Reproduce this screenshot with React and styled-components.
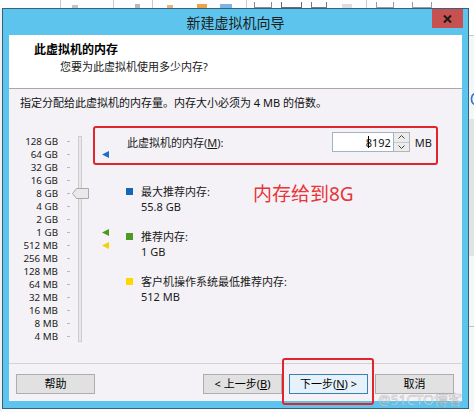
import React from "react";
import styled, { createGlobalStyle } from "styled-components";

const GlobalStyle = createGlobalStyle`
  html, body { margin: 0; padding: 0; }
  body {
    font-family: "Noto Sans", "Noto Sans CJK SC", sans-serif;
    font-size: 11px;
    color: #1a1a1a;
    background: #fbfbfb;
  }
`;

const Desktop = styled.div`
  position: relative;
  width: 474px;
  height: 412px;
  overflow: hidden;
  display: flex;
  flex-direction: column;
  background: #fbfbfb;
`;

/* strip of the host application's toolbar peeking above the dialog */
const HostToolbar = styled.div`
  height: 8px;
  display: flex;
  align-items: flex-end;
  flex-shrink: 0;
  background: #fdfdfd;
`;

const ToolGlyph = styled.span`
  display: block;
  margin-left: ${(p) => p.$gap}px;
  width: ${(p) => p.$w}px;
  height: ${(p) => p.$h}px;
  box-sizing: border-box;
  background: ${(p) => (p.$outline ? "transparent" : p.$color)};
  border: ${(p) => (p.$outline ? `1px solid ${p.$color}` : "none")};
  border-top: none;
`;

const Stage = styled.div`
  display: flex;
  flex: 1;
`;

const LeftEdge = styled.div`
  width: 2px;
  flex-shrink: 0;
  background: #f1f1f1;
`;

const Window = styled.div`
  position: relative;
  flex-shrink: 0;
  width: 467px;
  height: 401px;
  box-sizing: border-box;
  border: 1px solid #35637f;
  background: #5dc5ed;
  padding: 0 6px 7px;
  display: flex;
  flex-direction: column;
`;

const TitleBar = styled.div`
  margin: 0 -6px;
  height: 26px;
  display: flex;
  align-items: flex-start;
  flex-shrink: 0;
`;

const TitleSpacer = styled.div`
  width: 36px;
`;

const TitleText = styled.div`
  flex: 1;
  text-align: center;
  font-size: 14px;
  line-height: 27px;
  color: #1c1c1c;
`;

const CloseButton = styled.div`
  width: 31px;
  height: 19px;
  margin-right: 5px;
  background: #c75050;
  display: flex;
  align-items: center;
  justify-content: center;
`;

const Panel = styled.div`
  height: 366px;
  display: flex;
  flex-direction: column;
  background: #f4f2f6;
`;

const Header = styled.div`
  height: 54px;
  box-sizing: border-box;
  background: #ffffff;
  border-bottom: 1px solid #a9a9a9;
  padding: 7px 0 0 25px;
`;

const HeaderTitle = styled.div`
  font-weight: bold;
  font-size: 12px;
  line-height: 16px;
  color: #000;
`;

const HeaderSub = styled.div`
  padding-left: 26px;
  margin-top: 1px;
  line-height: 16px;
  color: #1a1a1a;
`;

const Body = styled.div`
  height: 274px;
  box-sizing: border-box;
  padding: 6px 0 0 11px;
`;

const Instruction = styled.div`
  line-height: 16px;
  color: #111;
`;

const Main = styled.div`
  position: relative;
  margin-top: 15px;
  display: flex;
`;

const Scale = styled.div`
  display: flex;
  flex-direction: column;
  padding-top: 9px;
`;

const ScaleRow = styled.div`
  height: 13px;
  display: flex;
  align-items: center;
`;

const ScaleLabel = styled.span`
  width: 38px;
  text-align: right;
  font-size: 9.8px;
  line-height: 13px;
  white-space: nowrap;
  color: #222;
`;

const Tick = styled.span`
  margin-left: 9px;
  width: 3px;
  height: 1px;
  background: #b8b8b8;
`;

const Rail = styled.div`
  position: relative;
  width: 42px;
  height: 220px;
`;

const Track = styled.div`
  margin: 10px 0 0 8px;
  width: 4px;
  height: 206px;
  box-sizing: border-box;
  border: 1px solid #cdcdcd;
  background: #e7e7e7;
`;

const Thumb = styled.svg`
  position: absolute;
  left: 2px;
  top: 62px;
`;

const Marker = styled.svg`
  position: absolute;
  left: 32px;
  top: ${(p) => p.$row * 13 + 12}px;
`;

const RightCol = styled.div`
  padding-left: 15px;
  display: flex;
  flex-direction: column;
`;

const MemoryRow = styled.div`
  margin-top: 6px;
  width: 305px;
  height: 20px;
  display: flex;
  align-items: center;
`;

const MemLabel = styled.span`
  flex: 1;
  line-height: 16px;
  margin-top: 2px;
`;

const NumberField = styled.div`
  width: 62px;
  height: 20px;
  box-sizing: border-box;
  border: 1px solid #a3b3c7;
  background: #ffffff;
  display: flex;
  align-items: center;
  justify-content: flex-end;
  padding-right: 2px;
  color: #111;
`;

const Caret = styled.span`
  width: 1px;
  height: 12px;
  background: #000;
  margin-right: -3px;
`;

const Spinner = styled.div`
  width: 16px;
  height: 20px;
  box-sizing: border-box;
  border: 1px solid #b5b5b5;
  border-left: none;
  display: flex;
  flex-direction: column;
`;

const SpinHalf = styled.div`
  flex: 1;
  background: #ececec;
  display: flex;
  align-items: center;
  justify-content: center;
  border-top: ${(p) => (p.$lower ? "1px solid #c8c8c8" : "none")};
`;

const Unit = styled.span`
  margin-left: 5px;
`;

const Legend = styled.div`
  margin-top: 32px;
  margin-left: -1px;
  display: flex;
  flex-direction: column;
  gap: 15px;
`;

const LegendItem = styled.div`
  display: flex;
  align-items: flex-start;
`;

const Swatch = styled.span`
  width: 7px;
  height: 7px;
  margin-top: 4px;
  margin-right: 8px;
  background: ${(p) => p.$color};
`;

const LegendText = styled.div`
  line-height: 15px;
`;

const RedFrame = styled.div`
  position: absolute;
  left: ${(p) => p.$x}px;
  top: ${(p) => p.$y}px;
  width: ${(p) => p.$w}px;
  height: ${(p) => p.$h}px;
  box-sizing: border-box;
  border: 2px solid #e2242b;
  border-radius: 3px;
  pointer-events: none;
`;

const RedNote = styled.div`
  position: absolute;
  left: 233px;
  top: 58px;
  font-size: 19px;
  line-height: 20px;
  color: #e8353a;
  white-space: nowrap;
`;

const Footer = styled.div`
  height: 38px;
  box-sizing: border-box;
  border-top: 1px solid #d3d3d3;
  padding: 10px 8px 0 7px;
  display: flex;
  justify-content: space-between;
  align-items: flex-start;
`;

const ButtonGroup = styled.div`
  display: flex;
  gap: 7px;
`;

const Button = styled.button`
  width: 79px;
  height: 20px;
  box-sizing: border-box;
  padding: 0;
  font-family: inherit;
  font-size: 11px;
  line-height: 18px;
  color: #000;
  border: 1px solid ${(p) => (p.$primary ? "#3c7fb1" : "#adadad")};
  background: ${(p) => (p.$primary ? "#e5f1fb" : "#e1e1e1")};
`;

const SideStrip = styled.div`
  flex: 1;
  display: flex;
  flex-direction: column;
  background: #f6f6f6;
  overflow: hidden;
`;

const SideTop = styled.div`
  height: 27px;
  background: #ffffff;
  border-bottom: 1px solid #c9c9c9;
`;

const SideArc = styled.svg`
  display: block;
  margin-top: 55px;
  margin-left: 1px;
`;

const SidePanel = styled.div`
  margin-top: 12px;
  height: 137px;
  background: #e3e3e3;
`;

const SideRule = styled.div`
  margin-top: 70px;
  height: 1px;
  background: #c4c4c4;
`;

const Watermark = styled.div`
  position: absolute;
  left: 378px;
  top: 392px;
  font-size: 14px;
  line-height: 16px;
  color: rgba(255, 255, 255, 0.55);
  -webkit-text-stroke: 0.6px rgba(150, 150, 150, 0.55);
  white-space: nowrap;
  pointer-events: none;
`;

const scaleLabels = [
  "128 GB", "64 GB", "32 GB", "16 GB", "8 GB", "4 GB", "2 GB", "1 GB",
  "512 MB", "256 MB", "128 MB", "64 MB", "32 MB", "16 MB", "8 MB", "4 MB",
];

const toolbarGlyphs = [
  { gap: 60, w: 1, h: 8, color: "#cacaca" },
  { gap: 11, w: 6, h: 3, color: "#c4c4c4" },
  { gap: 35, w: 1, h: 8, color: "#cacaca" },
  { gap: 21, w: 5, h: 4, color: "#b8b8b8" },
  { gap: 12, w: 1, h: 8, color: "#cacaca" },
  { gap: 14, w: 6, h: 3, color: "#e9b47a" },
  { gap: 24, w: 10, h: 4, color: "#f0a24a" },
  { gap: 13, w: 12, h: 4, color: "#7fb3e2" },
  { gap: 14, w: 1, h: 8, color: "#cacaca" },
  { gap: 7, w: 18, h: 6, color: "#8a8a8a", outline: true },
  { gap: 9, w: 21, h: 6, color: "#6a6a6a", outline: true },
  { gap: 9, w: 16, h: 6, color: "#7a7a7a", outline: true },
  { gap: 15, w: 10, h: 4, color: "#dddddd" },
  { gap: 14, w: 1, h: 8, color: "#cacaca" },
  { gap: 9, w: 18, h: 6, color: "#9a9a9a", outline: true },
  { gap: 18, w: 20, h: 6, color: "#9a9a9a", outline: true },
];

const legendItems = [
  { color: "#1666b4", title: "最大推荐内存:", value: "55.8 GB" },
  { color: "#4f9b22", title: "推荐内存:", value: "1 GB" },
  { color: "#ffd800", title: "客户机操作系统最低推荐内存:", value: "512 MB" },
];

const markers = [
  { row: 1, color: "#1f6fc1" },
  { row: 7, color: "#4a9a1d" },
  { row: 8, color: "#f2d200" },
];

function Triangle({ row, color }) {
  return (
    <Marker $row={row} width="7" height="7" viewBox="0 0 7 7">
      <polygon points="7,0 7,7 0,3.5" fill={color} />
    </Marker>
  );
}

export default function App() {
  return (
    <>
      <GlobalStyle />
      <Desktop>
        <HostToolbar>
          {toolbarGlyphs.map((g, i) => (
            <ToolGlyph key={i} $gap={g.gap} $w={g.w} $h={g.h} $color={g.color} $outline={g.outline} />
          ))}
        </HostToolbar>
        <Stage>
          <LeftEdge />
          <Window>
            <TitleBar>
              <TitleSpacer />
              <TitleText>新建虚拟机向导</TitleText>
              <CloseButton>
                <svg width="9" height="8" viewBox="0 0 9 8">
                  <path d="M1 0.5 L8 7.5 M8 0.5 L1 7.5" stroke="#1a1a1a" strokeWidth="2" />
                </svg>
              </CloseButton>
            </TitleBar>
            <Panel>
              <Header>
                <HeaderTitle>此虚拟机的内存</HeaderTitle>
                <HeaderSub>您要为此虚拟机使用多少内存?</HeaderSub>
              </Header>
              <Body>
                <Instruction>指定分配给此虚拟机的内存量。内存大小必须为 4 MB 的倍数。</Instruction>
                <Main>
                  <Scale>
                    {scaleLabels.map((l) => (
                      <ScaleRow key={l}>
                        <ScaleLabel>{l}</ScaleLabel>
                        <Tick />
                      </ScaleRow>
                    ))}
                  </Scale>
                  <Rail>
                    <Track />
                    <Thumb width="17" height="11" viewBox="0 0 17 11">
                      <polygon points="16.5,0.5 16.5,10.5 4.5,10.5 0.5,5.5 4.5,0.5" fill="#e9e9e9" stroke="#a9a9a9" />
                    </Thumb>
                    {markers.map((m) => (
                      <Triangle key={m.row} row={m.row} color={m.color} />
                    ))}
                  </Rail>
                  <RightCol>
                    <MemoryRow>
                      <MemLabel>
                        此虚拟机的内存(<u>M</u>):
                      </MemLabel>
                      <NumberField>
                        <Caret />
                        8192
                      </NumberField>
                      <Spinner>
                        <SpinHalf>
                          <svg width="7" height="4" viewBox="0 0 7 4">
                            <path d="M0.5 3.5 L3.5 0.5 L6.5 3.5" fill="none" stroke="#444" />
                          </svg>
                        </SpinHalf>
                        <SpinHalf $lower>
                          <svg width="7" height="4" viewBox="0 0 7 4">
                            <path d="M0.5 0.5 L3.5 3.5 L6.5 0.5" fill="none" stroke="#444" />
                          </svg>
                        </SpinHalf>
                      </Spinner>
                      <Unit>MB</Unit>
                    </MemoryRow>
                    <Legend>
                      {legendItems.map((it) => (
                        <LegendItem key={it.title}>
                          <Swatch $color={it.color} />
                          <LegendText>
                            <div>{it.title}</div>
                            <div>{it.value}</div>
                          </LegendText>
                        </LegendItem>
                      ))}
                    </Legend>
                  </RightCol>
                  <RedFrame $x={73} $y={0} $w={345} $h={39} />
                  <RedNote>内存给到8G</RedNote>
                </Main>
              </Body>
              <Footer>
                <Button>帮助</Button>
                <ButtonGroup>
                  <Button>&lt; 上一步(<u>B</u>)</Button>
                  <Button $primary>
                    下一步(<u>N</u>) &gt;
                  </Button>
                  <Button>取消</Button>
                </ButtonGroup>
              </Footer>
            </Panel>
            <RedFrame $x={279} $y={349} $w={92} $h={47} />
          </Window>
          <SideStrip>
            <SideTop />
            <SideArc width="6" height="16" viewBox="0 0 6 16">
              <path d="M6 2 A6 6 0 0 0 1.5 8 A6 6 0 0 0 6 14" fill="none" stroke="#2b78cf" strokeWidth="1.6" />
            </SideArc>
            <SidePanel />
            <SideRule />
          </SideStrip>
        </Stage>
        <Watermark>@51CTO博客</Watermark>
      </Desktop>
    </>
  );
}
